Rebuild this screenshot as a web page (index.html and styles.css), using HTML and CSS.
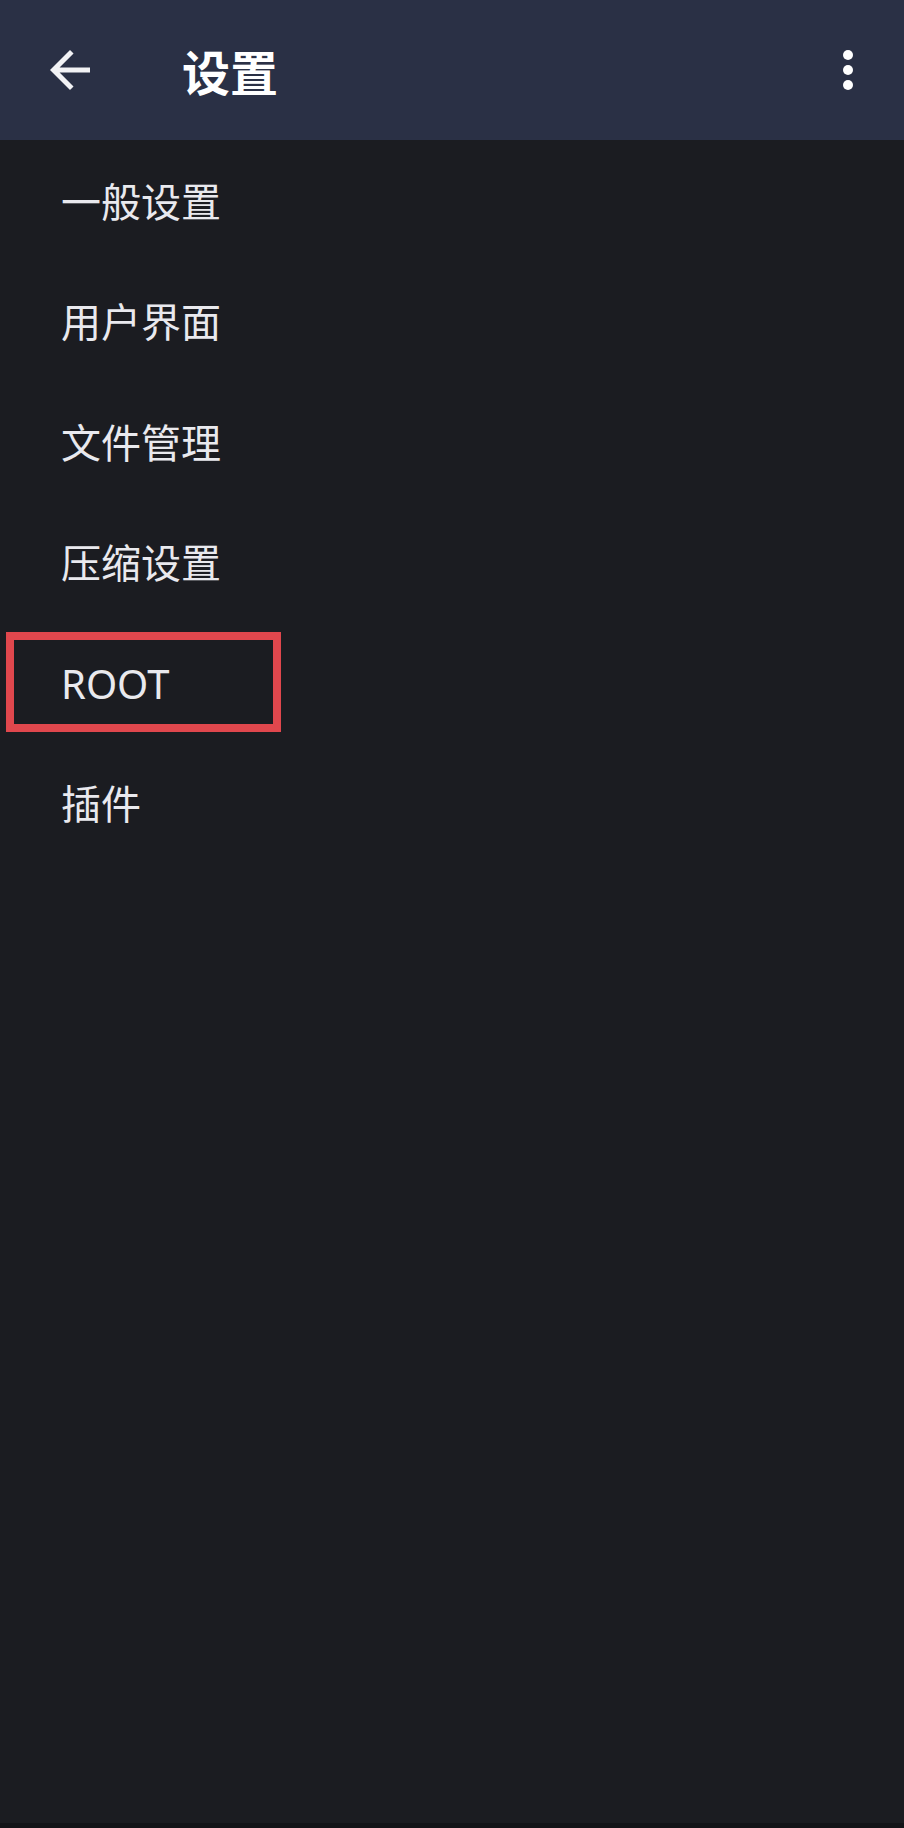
FILE: index.html
```html
<!DOCTYPE html>
<html lang="zh-CN">
<head>
<meta charset="utf-8">
<title>设置</title>
<link rel="stylesheet" href="styles.css">
</head>
<body>
<div class="screen">
  <header class="toolbar">
    <button class="icon-btn back" aria-label="返回">
      <svg viewBox="0 0 24 24" width="60" height="60"><path fill="#f2f2f5" d="M20 11H7.83l5.59-5.59L12 4l-8 8 8 8 1.41-1.41L7.83 13H20v-2z"/></svg>
    </button>
    <h1 class="title">设置</h1>
    <button class="icon-btn more" aria-label="更多">
      <svg viewBox="0 0 24 24" width="60" height="60"><circle cx="12" cy="6" r="2" fill="#ffffff"/><circle cx="12" cy="12" r="2" fill="#ffffff"/><circle cx="12" cy="18" r="2" fill="#ffffff"/></svg>
    </button>
  </header>
  <ul class="menu">
    <li class="item">一般设置</li>
    <li class="item">用户界面</li>
    <li class="item">文件管理</li>
    <li class="item">压缩设置</li>
    <li class="item highlighted">ROOT<span class="mark"></span></li>
    <li class="item">插件</li>
  </ul>
  <div class="navbar"></div>
</div>
</body>
</html>
```
FILE: styles.css
```css
html, body {
  margin: 0;
  padding: 0;
  background: #1b1c21;
}
body {
  font-family: "Noto Sans", "Noto Sans CJK SC", sans-serif;
  color: #e9e9ee;
}
.screen {
  width: 904px;
  height: 1828px;
  display: flex;
  flex-direction: column;
  background: #1b1c21;
}
.toolbar {
  height: 140px;
  flex: 0 0 140px;
  background: #2a3045;
  display: flex;
  align-items: center;
  padding: 0 26px 0 40px;
  box-sizing: border-box;
}
.icon-btn {
  width: 60px;
  height: 60px;
  padding: 0;
  border: 0;
  background: none;
  display: flex;
}
.title {
  margin: 0 0 0 82px;
  flex: 1;
  font-family: "Noto Sans CJK SC", sans-serif;
  font-size: 48px;
  font-weight: 700;
  color: #ffffff;
  line-height: 60px;
  letter-spacing: 0;
}
.menu {
  list-style: none;
  margin: 0;
  padding: 1.5px 0 0 0;
  flex: 1;
}
.item {
  position: relative;
  height: 120.5px;
  line-height: 120.5px;
  padding-left: 61px;
  font-size: 40px;
}
.mark {
  position: absolute;
  left: 6px;
  top: 8.5px;
  width: 275px;
  height: 100px;
  box-sizing: border-box;
  border: 8px solid #e0474d;
}
.navbar {
  flex: 0 0 5px;
  background: #131418;
}
```
